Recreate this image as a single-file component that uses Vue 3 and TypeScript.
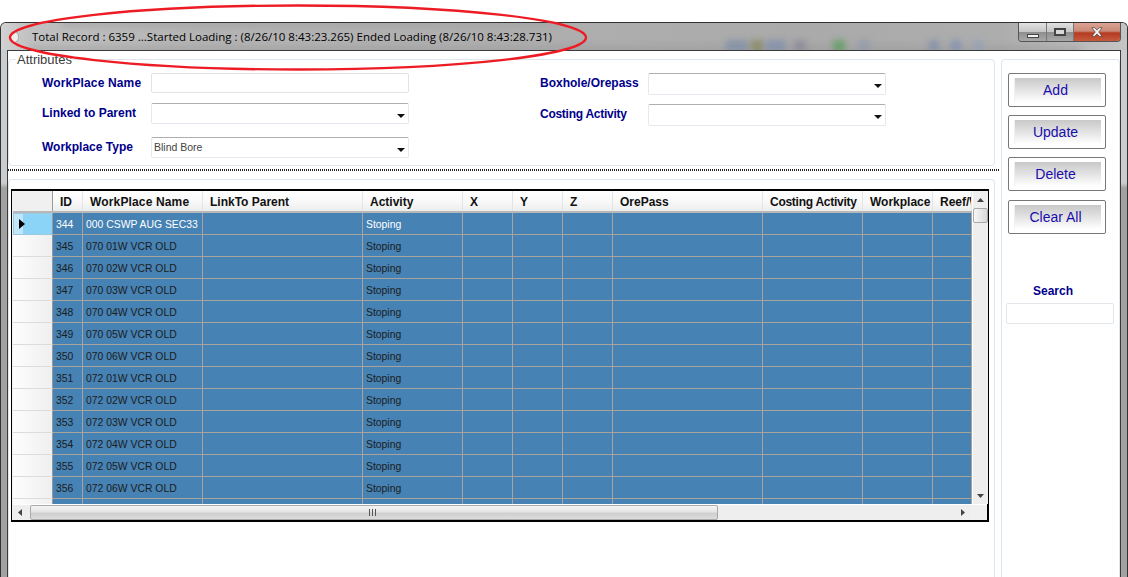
<script setup lang="ts">
interface Col { title: string; width: number }
const cols: Col[] = [
  { title: 'ID', width: 30 }, { title: 'WorkPlace Name', width: 120 }, { title: 'LinkTo Parent', width: 160 },
  { title: 'Activity', width: 100 }, { title: 'X', width: 50 }, { title: 'Y', width: 50 }, { title: 'Z', width: 50 },
  { title: 'OrePass', width: 150 }, { title: 'Costing Activity', width: 100 }, { title: 'Workplace', width: 70 }, { title: 'Reef/Waste', width: 39 },
]
const names = ['000 CSWP AUG SEC33', '070 01W VCR OLD', '070 02W VCR OLD', '070 03W VCR OLD', '070 04W VCR OLD', '070 05W VCR OLD', '070 06W VCR OLD', '072 01W VCR OLD', '072 02W VCR OLD', '072 03W VCR OLD', '072 04W VCR OLD', '072 05W VCR OLD', '072 06W VCR OLD', '']
const rows = names.map((name, i) => ({ id: name ? String(344 + i) : '', name, activity: name ? 'Stoping' : '' }))
const buttons = ['Add', 'Update', 'Delete', 'Clear All']
const patches = [
  { left: 725, width: 22, color: '#6f86a8' }, { left: 750, width: 12, color: '#7a7a40' }, { left: 765, width: 20, color: '#6f86b0' },
  { left: 793, width: 12, color: '#7d7d95' }, { left: 832, width: 12, color: '#3f9a3f' }, { left: 857, width: 12, color: '#8a98b0' },
  { left: 928, width: 10, color: '#6f86b0' }, { left: 950, width: 10, color: '#6f86b8' }, { left: 972, width: 10, color: '#8aa0c0' },
]
const cellText = (r: { id: string; name: string; activity: string }, i: number) => (i === 0 ? r.id : i === 1 ? r.name : i === 3 ? r.activity : '')
</script>

<template>
  <div class="page">
    <div class="window">
      <div class="titlebar">
        <span class="blur b1"></span><span class="blur b2"></span>
        <span v-for="p in patches" :key="p.left" class="patch" :style="{ left: p.left + 'px', width: p.width + 'px', background: p.color }"></span>
        <span class="app-icon"></span>
        <span class="title">Total Record : 6359 ...Started Loading : (8/26/10 8:43:23.265) Ended Loading (8/26/10 8:43:28.731)</span>
        <div class="caption">
          <span class="cap min"><i></i></span>
          <span class="cap max"><i></i></span>
          <span class="cap close">
            <svg width="12" height="10" viewBox="0 0 14 11"><path d="M1 .5h3.300L7 3.300 9.700.5H13L9 5.500l4 5H9.700L7 7.700 4.300 10.500H1l4-5z" fill="#f4f4f4" stroke="#4a3a38" stroke-width=".8"/></svg>
          </span>
        </div>
      </div>
      <div class="client">
        <div class="main">
          <section class="attrs">
            <span class="legend">Attributes</span>
            <div class="form-col left">
              <div class="field f1"><label>WorkPlace Name</label><div class="input in-left h20"></div></div>
              <div class="field f2"><label>Linked to Parent</label><div class="input in-left h21 combo"><b></b></div></div>
              <div class="field f3"><label>Workplace Type</label><div class="input in-left h21 combo"><span>Blind Bore</span><b></b></div></div>
            </div>
            <div class="form-col right">
              <div class="field f1"><label>Boxhole/Orepass</label><div class="input in-right h22 combo"><b></b></div></div>
              <div class="field f2b"><label>Costing Activity</label><div class="input in-right h22 combo"><b></b></div></div>
            </div>
          </section>
          <div class="splitter"></div>
          <section class="grid-panel">
            <div class="grid">
              <div class="grid-top">
                <div class="table">
                  <div class="thead">
                    <div class="corner"></div>
                    <div v-for="c in cols" :key="c.title" class="th" :style="{ width: c.width + 'px' }"><span>{{ c.title }}</span></div>
                  </div>
                  <div v-for="(r, ri) in rows" :key="ri" class="tr" :class="{ first: ri === 0 }">
                    <div class="rowhead"><svg v-if="ri === 0" width="6" height="10" viewBox="0 0 6 10"><path d="M0 0l6 5-6 5z" fill="#000"/></svg></div>
                    <div v-for="(c, ci) in cols" :key="c.title" class="td" :style="{ width: c.width + 'px' }">{{ cellText(r, ci) }}</div>
                  </div>
                </div>
                <div class="vscroll">
                  <svg class="arrow-up" width="7" height="4" viewBox="0 0 7 4"><path d="M0 4l3.500-4 3.500 4z" fill="#444"/></svg>
                  <div class="vthumb"></div>
                  <svg class="arrow-down" width="7" height="4" viewBox="0 0 7 4"><path d="M0 0l3.500 4 3.500-4z" fill="#444"/></svg>
                </div>
              </div>
              <div class="hscroll">
                <svg class="harrow" width="4" height="7" viewBox="0 0 4 7"><path d="M4 0L0 3.500 4 7z" fill="#444"/></svg>
                <div class="hthumb"><span class="grip"></span></div>
                <svg class="harrow2" width="4" height="7" viewBox="0 0 4 7"><path d="M0 0l4 3.500L0 7z" fill="#444"/></svg>
                <div class="sizebox"></div>
              </div>
            </div>
          </section>
        </div>
        <aside class="side">
          <div class="btns">
            <button v-for="b in buttons" :key="b" class="btn"><span>{{ b }}</span></button>
          </div>
          <div class="search-label">Search</div>
          <div class="search"></div>
        </aside>
      </div>
    </div>
    <svg class="ellipse" width="600" height="80" viewBox="0 0 600 80">
      <ellipse cx="298" cy="37.500" rx="288" ry="32" fill="none" stroke="#ed1c24" stroke-width="2.400"/>
    </svg>
  </div>
</template>

<style>
html, body { margin: 0; background: #fff; overflow: hidden; }
</style>

<style scoped>
.page { position: relative; width: 1128px; height: 577px; overflow: hidden; background: #fff; padding-top: 22px; box-sizing: border-box; font-family: "Liberation Sans", Arial, sans-serif; }
.window { width: 1128px; height: 560px; box-sizing: border-box; border: 1px solid #333; border-bottom: 0; border-radius: 6px 6px 0 0; background: linear-gradient(180deg, #c9cdd0 0, #c9cdd0 160px, #a2a2a2 165px, #a2a2a2 100%); display: flex; flex-direction: column; position: relative; }
.titlebar { position: relative; height: 27px; flex: none; display: flex; align-items: center; padding-left: 8px; background: linear-gradient(90deg, #d2d2d2 0, #c0c0c0 30px, #b4b4b4 200px, #aaa 800px, #adadad 1000px, #c4c4c4 100%); overflow: hidden; border-radius: 5px 5px 0 0; }
.app-icon { width: 7px; height: 10px; border-radius: 50%; background: #eee; border: 1px solid #aaa; margin-left: 1px; flex: none; position: relative; }
.title { margin-left: 13px; font: 11.520px/16px "Open Sans", "Noto Sans", sans-serif; color: #000; white-space: nowrap; position: relative; }
.blur { position: absolute; filter: blur(3px); }
.b1 { left: 60px; top: -2px; width: 500px; height: 6px; background: #999; opacity: .5; }
.b2 { left: 30px; top: 24px; width: 1050px; height: 4px; background: #8f8f8f; opacity: .6; }
.patch { position: absolute; top: 17px; height: 12px; filter: blur(3px); opacity: .55; }
.caption { position: absolute; right: 6px; top: 0; display: flex; height: 19px; box-sizing: border-box; border: 1px solid #555; border-top: 0; border-radius: 0 0 4px 4px; overflow: hidden; }
.cap { display: flex; align-items: center; justify-content: center; height: 18px; box-sizing: border-box; border-right: 1px solid #777; background: linear-gradient(180deg, #e2e2e2 0, #c6c6c6 48%, #8f8f8f 52%, #a8a8a8 100%); }
.min { width: 28px; }
.min i { display: block; width: 12px; height: 4px; background: #f4f4f4; border: 1px solid #444; box-sizing: border-box; margin-top: 8px; }
.max { width: 27px; }
.max i { display: block; width: 12px; height: 8px; background: #d8d8d8; border: 2px solid #444; box-sizing: border-box; margin-top: 0; }
.close { width: 46px; border-right: 0; background: linear-gradient(180deg, #dca394 0, #c98a78 45%, #b53a22 55%, #c65a3d 100%); }
.close svg { margin-top: 0; }
.client { margin-left: 6px; width: 1114px; flex: 1; background: #fff; display: flex; padding-top: 8px; box-sizing: border-box; border: 1px solid #3a3a3a; border-bottom: 0; }
.main { width: 987px; flex: none; display: flex; flex-direction: column; }
.attrs { position: relative; height: 107px; flex: none; box-sizing: border-box; border: 1px solid #dfe6ec; border-radius: 4px; display: flex; }
.legend { position: absolute; left: 7px; top: -7px; background: #fff; padding: 0 1px; font-size: 13px; line-height: 14px; color: #3c3c3c; }
.form-col { display: flex; flex-direction: column; }
.left { width: 531px; padding-left: 33px; box-sizing: border-box; flex: none; }
.right { width: 400px; flex: none; }
.field { display: flex; align-items: flex-start; }
.field label { font-size: 12px; font-weight: 700; color: #00008b; line-height: 14px; padding-top: 2px; white-space: nowrap; }
.left label { width: 109px; }
.right label { width: 108px; }
.left .field.f1 { margin-top: 13px; }
.left .f1 label { padding-top: 3px; letter-spacing: .15px; }
.right .field.f1 { margin-top: 13px; }
.right .f1 label { padding-top: 3px; }
.left .field.f2 { margin-top: 10px; }
.left .field.f3 { margin-top: 13px; }
.left .f3 label { padding-top: 3px; }
.left .f2 label { padding-top: 3px; }
.right .f2b { margin-top: 9px; }
.right .f2b label { padding-top: 3px; letter-spacing: -.27px; }
.input { box-sizing: border-box; border: 1px solid #e3e9ee; border-top-color: #aeaeae; border-radius: 2px; background: #fff; position: relative; font-size: 10.500px; color: #444; }
.in-left { width: 258px; }
.in-right { width: 238px; }
.h20 { height: 20px; border-color: #dfe4e8; }
.h21 { height: 21px; }
.h22 { height: 22px; }
.combo span { position: absolute; left: 2px; top: 3px; line-height: 13px; }
.combo b { position: absolute; right: 3px; top: 10px; width: 0; height: 0; border: 4px solid transparent; border-top: 4px solid #111; border-bottom: 0; }
.splitter { height: 2px; margin-top: 3px; width: 992px; background-image: repeating-linear-gradient(90deg, #222 0 1px, #fff 1px 2px); flex: none; }
.grid-panel { margin-top: 8px; flex: 1; border: 1px solid #dfe6ec; border-bottom: 0; border-radius: 4px 4px 0 0; padding: 9px 0 0 2px; box-sizing: border-box; }
.grid { width: 978px; height: 333px; box-sizing: border-box; border: 2px solid #000; border-width: 2px 2px 2px 1px; background: #f0f0f0; display: flex; flex-direction: column; padding-left: 1px; }
.grid-top { flex: 1; display: flex; min-height: 0; }
.table { width: 959px; flex: none; overflow: hidden; background: #4682b4; }
.thead { display: flex; height: 22px; background: linear-gradient(180deg, #fff 0, #f9f9f9 50%, #eceded 100%); border-bottom: 2px solid #b8b8b8; box-sizing: border-box; }
.corner { width: 40px; flex: none; box-sizing: border-box; background: #f0f0f0; border-right: 1px solid #999; }
.th { flex: none; box-sizing: border-box; padding-left: 7px; font-size: 12px; font-weight: 700; line-height: 22px; color: #111; border-right: 1px solid #e4e4e4; white-space: nowrap; overflow: hidden; }
.th:nth-child(3) { letter-spacing: .15px; }
.th:nth-child(10) { letter-spacing: -.27px; }
.tr { display: flex; height: 22px; }
.rowhead { width: 40px; flex: none; box-sizing: border-box; background: linear-gradient(90deg, #fdfdfd, #efefef); border-right: 1px solid #999; border-bottom: 1px solid #dcdcdc; display: flex; align-items: center; padding-left: 6px; }
.first .rowhead { background: linear-gradient(90deg, #bfe6fa 0 9px, #8bd3f7 9px); border: 1px solid #9cc9e0; border-right: 1px solid #999; padding-left: 5px; }
.td { flex: none; box-sizing: border-box; padding-left: 3px; font-size: 10.400px; line-height: 23px; color: #1c1c1c; border-right: 1px solid #a8a39c; border-bottom: 1px solid #a8a39c; white-space: nowrap; overflow: hidden; }
.first .td { color: #fff; }
.vscroll { position: relative; width: 16px; flex: none; background: #eee; border-left: 1px solid #fff; box-sizing: border-box; display: flex; flex-direction: column; align-items: center; }
.arrow-up { margin-top: 7px; }
.vthumb { margin-top: 6px; width: 15px; height: 15px; box-sizing: border-box; border: 1px solid #aaa; border-radius: 2px; background: linear-gradient(90deg, #f7f7f7, #d8d8d8); }
.arrow-down { margin-top: auto; margin-bottom: 6px; }
.hscroll { height: 16px; flex: none; display: flex; align-items: center; background: #eee; border-top: 1px solid #fff; box-sizing: border-box; position: relative; }
.harrow { margin-left: 5px; flex: none; }
.hthumb { margin-left: 8px; width: 688px; height: 15px; flex: none; box-sizing: border-box; border: 1px solid #aaa; border-radius: 2px; padding-right: 4px; background: linear-gradient(180deg, #f5f5f5, #e4e4e4 45%, #cfcfcf 55%, #dcdcdc); display: flex; align-items: center; justify-content: center; }
.grip { width: 7px; height: 7px; background-image: repeating-linear-gradient(90deg, #555 0 1px, transparent 1px 3px); }
.harrow2 { margin-left: 243px; flex: none; }
.sizebox { margin-left: auto; width: 16px; height: 15px; background: #f0f0f0; }
.side { margin-left: 6px; width: 119px; flex: none; border: 1px solid #dfe6ec; border-bottom: 0; border-radius: 4px 4px 0 0; box-sizing: border-box; display: flex; flex-direction: column; padding: 13px 0 0 6px; }
.btns { display: flex; flex-direction: column; gap: 8px; }
.btn { width: 98px; height: 34px; box-sizing: border-box; padding: 4px 4px 4px 5px; border: 1px solid #777; border-radius: 2px; background: #fff; font: inherit; display: flex; }
.btn:last-child { margin-top: 1px; }
.btn span { flex: 1; display: block; box-sizing: border-box; padding-right: 4px; padding-top: 1px; font-size: 14px; line-height: 23px; color: #1a0dab; background: linear-gradient(180deg, #c8c8c8 0, #e6e6e6 55%, #fff 100%); box-shadow: inset 1px 0 #f0f0f0; }
.search-label { margin-top: 50px; margin-left: 25px; font-size: 12px; font-weight: 700; line-height: 14px; color: #00008b; }
.search { margin-top: 5px; margin-left: -2px; width: 108px; height: 21px; box-sizing: border-box; border: 1px solid #e2e6ea; border-radius: 2px; }
.ellipse { position: absolute; left: 0; top: 0; pointer-events: none; }
</style>
